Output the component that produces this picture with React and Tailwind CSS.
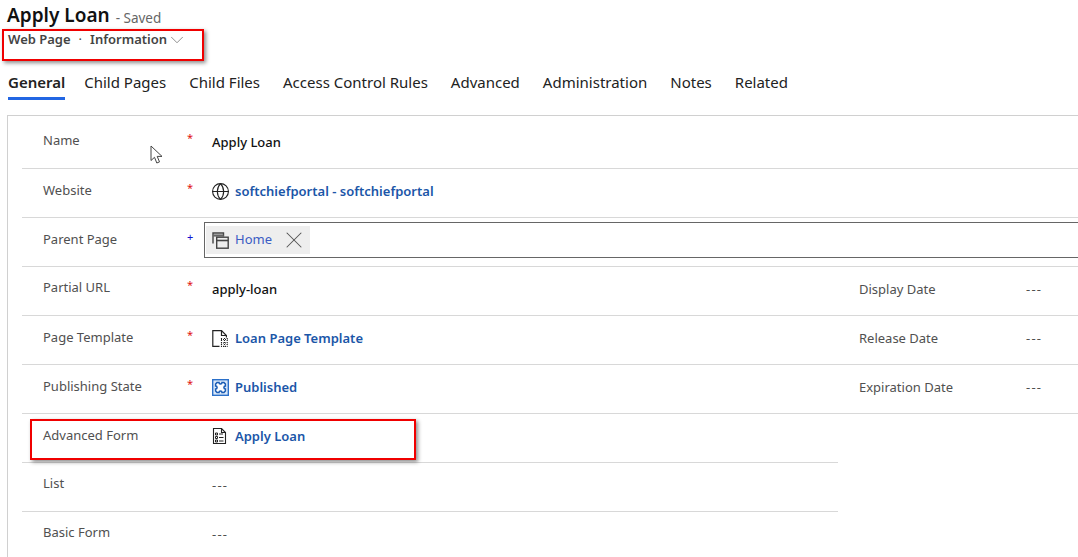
import React from 'react';
import { ChevronDown, Globe, X } from 'lucide-react';

const PagesIcon = () => (
  <svg width="17" height="17" viewBox="0 0 17 17" fill="none" stroke="#444" strokeWidth="1.400">
    <path d="M1 11.500V1h10.500v3.500" />
    <path d="M1 3.500h10.500" strokeWidth="2.200" stroke="#666" />
    <rect x="4.700" y="5.200" width="11.500" height="11" fill="#eeeeee" />
    <path d="M4.700 8.500h11.500" strokeWidth="1.600" />
  </svg>
);

const TemplateIcon = () => (
  <svg width="16" height="17" viewBox="0 0 16 17" fill="none" stroke="#222" strokeWidth="1.200">
    <path d="M7.500 16.400H.8V.6h8.700L14.400 5.500V7.500" />
    <path d="M9.500.6v4.900h4.900" />
    <path d="M9 9.500h6.500M9 13h6.500M9 16.400h6.500M9.500 8v8.500M12.500 8v8.500M15.200 8v8.500" strokeDasharray="1 1" />
  </svg>
);

const StateIcon = () => (
  <svg width="17" height="17" viewBox="0 0 17 17" fill="none">
    <rect x="0.700" y="0.700" width="15.600" height="15.600" fill="#dbe8f8" stroke="#2b70c9" strokeWidth="1.400" />
    <path d="M5 3.600h2a1.500 1.500 0 0 0 3 0h2l1.400 1.400v2a1.500 1.500 0 0 0 0 3v2L12 13.400h-2a1.500 1.500 0 0 0-3 0H5L3.600 12v-2a1.500 1.500 0 0 0 0-3V5z" fill="#fff" stroke="#1a5cb4" strokeWidth="1.500" />
  </svg>
);

const FormIcon = () => (
  <svg width="15" height="16" viewBox="0 0 15 16" fill="none" stroke="#222" strokeWidth="1.100">
    <path d="M1.500 15.500V.5h8l4 4v11z" />
    <path d="M9.500.5v4h4" />
    <path d="M3.500 5h2v2h-2zM3.500 8.500h2v2h-2zM3.500 12h2v2h-2z" strokeWidth="1" />
    <path d="M7 6h4M7 9.500h4.500M7 13h4.500" />
  </svg>
);

const CursorIcon = () => (
  <svg width="14" height="20" viewBox="0 0 14 20" fill="#fff" stroke="#444" strokeWidth="1">
    <path d="M1 1v14.500l3.500-3.200 2.300 5.700 2.700-1.100-2.300-5.500h4.800z" />
  </svg>
);

const tabs = ['Child Pages', 'Child Files', 'Access Control Rules', 'Advanced', 'Administration', 'Notes', 'Related'];

function Label({ text, mark, top = 'pt-[11px]' }) {
  return (
    <div className={`flex w-[190px] shrink-0 pl-[21px] ${top}`}>
      <span className="w-[144px] shrink-0 text-[13px] leading-5 text-[#505050]">{text}</span>
      {mark === 'req' && <span className="pt-[1px] text-[11px] leading-[14px] text-[#e01010]">*</span>}
      {mark === 'rec' && <span className="pt-[1px] text-[11px] leading-[14px] text-[#1010d0]">+</span>}
    </div>
  );
}

function LinkValue({ icon, text }) {
  return (
    <div className="flex h-5 items-center">
      <span className="flex w-[23px] shrink-0">{icon}</span>
      <span className="text-[13px] font-semibold leading-5 text-[#1b56a8]">{text}</span>
    </div>
  );
}

function Empty() {
  return <span className="text-[13px] leading-5 tracking-[1.2px] text-[#505050]">---</span>;
}

function Row({ label, mark, width = 'w-full', height = 'h-[49px]', top, children, side }) {
  return (
    <div className={`flex border-b border-[#d8d8d8] ${width} ${height}`}>
      <Label text={label} mark={mark} top={top} />
      <div className="flex w-[626px] shrink-0 items-start pt-[12px]">{children}</div>
      {side && (
        <div className="flex pl-[21px] pt-[12px]">
          <span className="w-[167px] shrink-0 text-[13px] leading-5 text-[#505050]">{side}</span>
          <Empty />
        </div>
      )}
    </div>
  );
}

export default function App() {
  return (
    <div className="relative h-[557px] w-full overflow-hidden bg-white font-['Noto_Sans',sans-serif]">
      {/* Header */}
      <div className="flex h-[29px] items-end pl-[7px]">
        <h1 className="text-[19px] font-semibold leading-7 text-[#111]">Apply Loan</h1>
        <span className="mb-[1px] ml-[6px] text-[13.5px] leading-5 text-[#666]">- Saved</span>
      </div>
      <div className="mt-[1px] flex h-[20px] items-center pl-[8px] text-[13px] font-semibold text-[#444]">
        <span>Web Page</span>
        <span className="mx-[8px] font-normal">·</span>
        <span>Information</span>
        <ChevronDown className="-my-1 -ml-[1px] h-[22px] w-[22px] text-[#777]" strokeWidth={0.9} />
      </div>

      {/* Tabs */}
      <div className="mt-[14px] flex h-[35px] pl-[8px] text-[15px] text-[#222]">
        <div className="mr-[19px] h-[36px] border-b-[3px] border-[#2266e3] pt-[8px] font-semibold leading-5">General</div>
        <div className="flex gap-[23px] pt-[8px] leading-5">
          {tabs.map((t) => (
            <span key={t}>{t}</span>
          ))}
        </div>
      </div>

      {/* Form card */}
      <div className="ml-[7px] mt-[16px] border-l border-t border-[#d0d0d0] pl-[14px]">
        <Row label="Name" mark="req" height="h-[53px]" top="pt-[14px]">
          <span className="pt-[4px] text-[13px] font-medium leading-5 text-[#111]">Apply Loan</span>
        </Row>
        <Row label="Website" mark="req">
          <LinkValue icon={<Globe className="-m-[1.5px] h-[19px] w-[19px] text-[#222]" strokeWidth={1.4} />} text="softchiefportal - softchiefportal" />
        </Row>
        <div className="flex h-[49px] border-b border-[#d8d8d8]">
          <Label text="Parent Page" mark="rec" />
          <div className="-ml-[8px] mt-[4px] flex h-[36px] flex-1 items-center border border-r-0 border-[#666] pl-[1px]">
            <div className="flex h-[28px] w-[104px] items-center bg-[#eeeeee] pl-[6px]">
              <span className="flex w-[23px] shrink-0"><PagesIcon /></span>
              <span className="w-[45px] shrink-0 text-[13px] text-[#3b5cc4]">Home</span>
              <X className="h-7 w-7 shrink-0 text-[#555]" strokeWidth={0.9} />
            </div>
          </div>
        </div>
        <Row label="Partial URL" mark="req" top="pt-[10px]" side="Display Date">
          <span className="text-[13px] font-medium leading-5 text-[#111]">apply-loan</span>
        </Row>
        <Row label="Page Template" mark="req" side="Release Date">
          <LinkValue icon={<TemplateIcon />} text="Loan Page Template" />
        </Row>
        <Row label="Publishing State" mark="req" side="Expiration Date">
          <LinkValue icon={<StateIcon />} text="Published" />
        </Row>
        <Row label="Advanced Form" width="w-[816px]">
          <LinkValue icon={<FormIcon />} text="Apply Loan" />
        </Row>
        <Row label="List" width="w-[816px]" top="pt-[10px]">
          <Empty />
        </Row>
        <Row label="Basic Form" width="w-[816px]" top="pt-[10px]">
          <Empty />
        </Row>
      </div>

      {/* Annotations drawn over the screenshot */}
      <div className="absolute left-[2px] top-[29px] h-[32px] w-[202px] border-2 border-[#f00000] shadow-[2px_2px_4px_rgba(0,0,0,0.45)]" />
      <div className="absolute left-[30px] top-[419px] h-[41px] w-[386px] border-2 border-[#f00000] shadow-[2px_2px_4px_rgba(0,0,0,0.45)]" />
      <div className="absolute left-[150px] top-[145px]"><CursorIcon /></div>
    </div>
  );
}
